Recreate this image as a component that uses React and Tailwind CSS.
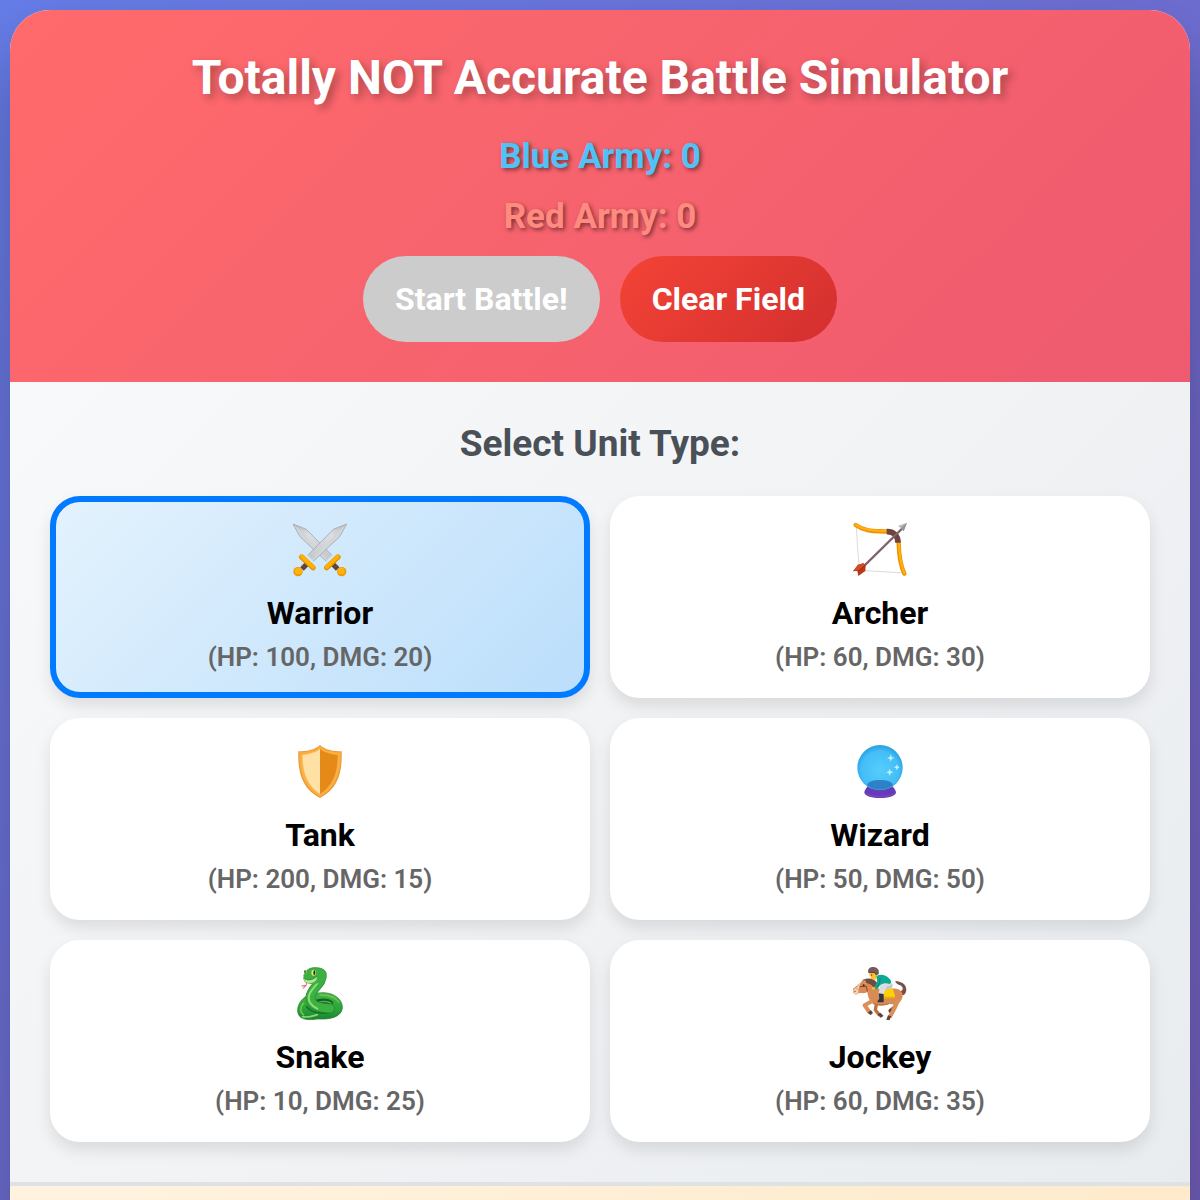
import React, { useState } from "react";
import clsx from "clsx";

function SwordsIcon() {
  return (
    <svg viewBox="36 36 168 168" className="size-14" aria-hidden="true">
      <defs>
        <linearGradient id="blade" x1="0" y1="0" x2="1" y2="1">
          <stop offset="0" stopColor="#b4b8bb" />
          <stop offset="0.35" stopColor="#dcdee0" />
          <stop offset="1" stopColor="#c3c7ca" />
        </linearGradient>
        <g id="sword">
          <path d="M39 42 L79 58 L156 136 L139 154 L60 80 Z" fill="url(#blade)" />
          <path d="M39 42 L60 80 L139 154 L143 150 L72 72 Z" fill="#d3d6d8" />
          <path
            d="M39 42 L79 58 L156 136 M39 42 L60 80 L139 154"
            fill="none"
            stroke="#a3a8ac"
            strokeWidth="2.5"
          />
          <path d="M156 160 L173 177" stroke="#5d4037" strokeWidth="15" />
          <path d="M157 168 L167 158 M163 174 L173 164" stroke="#7b5a4e" strokeWidth="2" />
          <path d="M140 173 L174 141" stroke="#e59100" strokeWidth="16" strokeLinecap="round" />
          <path d="M140 171 L173 140" stroke="#ffb300" strokeWidth="11" strokeLinecap="round" />
          <circle cx="185" cy="185" r="14" fill="#f09b00" />
          <circle cx="184" cy="183" r="10" fill="#ffb511" />
        </g>
      </defs>
      <use href="#sword" />
      <use href="#sword" transform="matrix(-1 0 0 1 239 0)" />
    </svg>
  );
}

function BowIcon() {
  return (
    <svg viewBox="36 36 168 168" className="size-14" aria-hidden="true">
      <path d="M49 47 C52 95 53 140 60 181 L194 189" fill="none" stroke="#cfd3d6" strokeWidth="2.5" />
      <path
        d="M47 45 C82 70 117 61 146 65 C166 69 175 80 176 101 C177 135 180 164 193 191"
        fill="none"
        stroke="#ef9300"
        strokeWidth="13"
        strokeLinecap="round"
      />
      <path
        d="M47 44 C82 68 119 60 146 64 C168 68 176 80 177 101 C178 135 182 163 193 190"
        fill="none"
        stroke="#ffb014"
        strokeWidth="6"
        strokeLinecap="round"
      />
      <path d="M140 65 C160 64 174 76 174 98" fill="none" stroke="#6d4540" strokeWidth="17" />
      <path d="M66 174 L188 54" stroke="#765660" strokeWidth="7" />
      <path d="M69 170 L185 56" stroke="#967c85" strokeWidth="2" />
      <path d="M201 38 L174 48 L183 54 L191 64 Z" fill="#b4b7b9" />
      <path d="M201 38 L183 54 L191 64 Z" fill="#909598" />
      <path d="M77 164 L70 160 L54 164 L39 184 L52 183 L55 198 L76 183 Z" fill="#b93818" />
      <path d="M77 164 L70 160 L54 164 L39 184 L55 180 Z" fill="#d14c24" />
      <path d="M75 166 L54 185" fill="none" stroke="#9a3019" strokeWidth="3" />
    </svg>
  );
}

function ShieldIcon() {
  return (
    <svg viewBox="36 36 168 168" className="size-14" aria-hidden="true">
      <path
        d="M120 39 C105 54 79 58 55 58 C53 118 64 169 120 198 C176 169 187 118 185 58 C161 58 135 54 120 39 Z"
        fill="#e79b36"
      />
      <path
        d="M120 43 C106 57 80 61 58 61 C57 116 68 165 120 194 C172 165 183 116 182 61 C160 61 134 57 120 43 Z"
        fill="#fbae42"
      />
      <path d="M120 51 C107 62 85 67 67 69 C67 116 77 158 120 186 Z" fill="#ffe0a5" />
      <path d="M120 51 C133 62 155 67 173 69 C173 116 163 158 120 186 Z" fill="#e58a19" />
      <path d="M67 69 C67 116 77 158 120 186" fill="none" stroke="#f5c46f" strokeWidth="2" />
    </svg>
  );
}

function CrystalBallIcon() {
  return (
    <svg viewBox="36 36 168 168" className="size-14" aria-hidden="true">
      <defs>
        <radialGradient id="ball" cx="0.5" cy="0.55" r="0.55">
          <stop offset="0" stopColor="#55cdfc" />
          <stop offset="0.75" stopColor="#43bef7" />
          <stop offset="1" stopColor="#269fdf" />
        </radialGradient>
      </defs>
      <path d="M86 156 C80 169 73 175 73 182 C77 203 164 203 168 182 C168 174 160 168 154 156 Z" fill="#673ab7" />
      <path d="M75 181 C82 197 159 197 166 181" fill="none" stroke="#7e4ac7" strokeWidth="3" />
      <circle cx="120" cy="107" r="68" fill="url(#ball)" />
      <path d="M82 160 C80 139 160 139 158 160 C140 177 100 177 82 160 Z" fill="#2465b3" opacity="0.7" />
      <path d="M82 160 C100 177 140 177 158 160" fill="none" stroke="#3b8bcf" strokeWidth="2" />
      <path
        d="M152 67 L155 75 L163 78 L155 81 L152 89 L149 81 L141 78 L149 75 Z M171 97 L173 103 L179 106 L173 109 L171 115 L168 109 L162 106 L168 103 Z M149 110 L152 118 L160 121 L152 124 L149 132 L146 124 L138 121 L146 118 Z"
        fill="#c4f1ff"
      />
    </svg>
  );
}

function SnakeIcon() {
  return (
    <svg viewBox="36 36 168 168" className="size-14" aria-hidden="true">
      <defs>
        <linearGradient id="coil" x1="0" y1="0" x2="0" y2="1">
          <stop offset="0" stopColor="#45b542" />
          <stop offset="0.6" stopColor="#2fa33a" />
          <stop offset="1" stopColor="#1a8531" />
        </linearGradient>
      </defs>
      <path
        d="M78 82 C80 87 80 91 77 95 L66 96 M77 95 L70 103"
        fill="none"
        stroke="#ee4055"
        strokeWidth="3"
        strokeLinecap="round"
      />
      {/* coil */}
      <path
        d="M84 124 C62 134 49 158 54 178 C60 200 92 198 112 195 C150 197 182 190 187 164 C190 138 164 117 132 116 C112 116 98 118 84 124 Z"
        fill="url(#coil)"
        stroke="#1d7f2f"
        strokeWidth="2"
      />
      <path d="M100 142 C112 131 148 130 160 144 C162 156 122 160 104 153 Z" fill="#14642a" />
      <path d="M112 147 C124 141 142 141 154 148" fill="none" stroke="#4fae49" strokeWidth="5" />
      <path d="M120 123 C144 122 166 130 176 144" fill="none" stroke="#6cc756" strokeWidth="4" strokeLinecap="round" />
      <path d="M70 148 C60 162 60 174 70 182" fill="none" stroke="#6cc756" strokeWidth="5" strokeLinecap="round" />
      <path d="M80 158 C92 174 116 180 148 175" fill="none" stroke="#14702c" strokeWidth="5" strokeLinecap="round" />
      <path d="M68 188 C84 192 98 186 112 182" fill="none" stroke="#8fd46c" strokeWidth="5" strokeLinecap="round" />
      {/* neck */}
      <path
        d="M125 62 C130 88 93 102 91 130 C91 154 118 163 150 163"
        fill="none"
        stroke="#1f8a31"
        strokeWidth="29"
        strokeLinecap="round"
      />
      <path
        d="M125 62 C130 88 93 102 91 130 C91 154 118 163 150 163"
        fill="none"
        stroke="#3cb040"
        strokeWidth="25"
        strokeLinecap="round"
      />
      <path
        d="M117 78 C112 95 88 108 86 130 C86 148 98 158 112 164"
        fill="none"
        stroke="#93dc76"
        strokeWidth="6"
        strokeLinecap="round"
      />
      {/* head */}
      <path
        d="M76 56 C82 40 105 37 124 43 C140 49 142 64 138 76 C124 88 96 94 82 88 C73 86 68 74 71 66 Z"
        fill="#3cb040"
      />
      <path
        d="M71 66 C72 60 80 44 96 42 C112 38 134 43 139 58"
        fill="none"
        stroke="#2b9636"
        strokeWidth="2"
      />
      <path d="M71 72 C78 82 99 80 111 68 C113 82 94 91 80 86 C75 84 71 78 71 72 Z" fill="#b8df98" />
      <path d="M71 72 C80 80 98 79 111 66" fill="none" stroke="#23892e" strokeWidth="2" />
      <ellipse cx="101" cy="56" rx="7" ry="9" fill="#e3e675" />
      <ellipse cx="103" cy="56" rx="3" ry="7" fill="#18311b" />
      <ellipse cx="76" cy="53" rx="4" ry="5" fill="#b9ca5e" />
      <ellipse cx="75" cy="53" rx="2" ry="4" fill="#254c22" />
    </svg>
  );
}

function JockeyIcon() {
  return (
    <svg viewBox="36 36 168 168" className="size-14" aria-hidden="true">
      {/* tail */}
      <path
        d="M180 112 C192 110 190 98 180 94 C172 91 167 87 166 81 C183 82 199 90 199 107 C198 122 188 127 182 122 Z"
        fill="#795044"
      />
      {/* far legs */}
      <path
        d="M110 146 L106 168 L119 184 M164 144 L166 157 L150 170"
        fill="none"
        stroke="#bf7043"
        strokeWidth="10"
        strokeLinejoin="round"
      />
      <path d="M113 181 L121 176 L131 186 L121 191 Z M154 163 L158 174 L147 176 L145 168 Z" fill="#5d4240" />
      {/* body, neck and head */}
      <path
        d="M78 78 C94 74 104 88 108 102 C130 108 152 102 168 104 C188 107 192 124 184 138 C176 152 160 152 146 150 C130 156 112 156 100 150 C88 142 84 128 82 114 C74 119 66 117 59 117 L48 122 L40 117 L39 104 L62 86 L70 76 Z"
        fill="#d98b56"
      />
      <path
        d="M98 140 L74 154 L90 177 M176 136 L164 162 L149 190"
        fill="none"
        stroke="#dc9059"
        strokeWidth="12"
        strokeLinejoin="round"
      />
      <path d="M84 175 L93 169 L99 177 L91 184 Z M144 184 L154 187 L148 199 L139 197 Z" fill="#5d4240" />
      <path d="M100 148 C114 154 130 154 146 149" fill="none" stroke="#c2733f" strokeWidth="4" />
      {/* mane */}
      <path
        d="M70 77 C85 70 104 74 111 86 C118 96 114 104 106 106 C98 104 99 93 90 91 L74 85 Z"
        fill="#744b40"
      />
      <path d="M70 88 L75 76 L79 89 Z" fill="#e49b67" />
      <path d="M45 101 L56 109 L55 119 L45 122 L39 112 Z" fill="#f3d0b2" />
      <path d="M61 87 L48 102 L56 106 Z" fill="#ead1b6" />
      <path d="M59 98 L79 97 L82 112" fill="none" stroke="#854131" strokeWidth="3" />
      <circle cx="71" cy="94" r="3" fill="#372d2b" />
      <circle cx="45" cy="112" r="2" fill="#684234" />
      {/* saddle cloth */}
      <path d="M126 104 L158 101 C161 113 166 123 165 131 L127 133 Z" fill="#fdd008" />
      <path d="M127 128 L165 128 L164 133 L127 134 Z" fill="#e8ad0a" />
      {/* rider */}
      <path d="M122 90 C134 82 154 80 158 92 C160 104 144 106 136 106 L131 122 L115 120 Z" fill="#dadee2" />
      <path d="M140 97 C148 96 154 93 158 89 C160 100 148 106 137 106 Z" fill="#c0c6cb" />
      <path d="M116 118 L131 120 L131 145 L112 145 C111 139 118 137 118 133 Z" fill="#37363b" />
      <path d="M87 54 L110 54 L112 70 L106 77 L93 75 L92 68 L88 64 Z" fill="#fdc02f" />
      <circle cx="95" cy="63" r="2" fill="#4e3422" />
      <path
        d="M110 66 C122 59 138 63 149 75 C156 82 154 88 148 90 C138 86 130 88 122 92 L112 105 L101 101 L111 86 Z"
        fill="#11a893"
      />
      <path d="M120 72 L119 86 L110 100" fill="none" stroke="#078678" strokeWidth="3" />
      <path d="M98 98 L107 101 L103 108 L95 104 Z" fill="#fbc02d" />
      <path d="M85 55 C82 45 89 39 101 39 C113 40 119 49 116 61 L108 64 L104 57 Z" fill="#78585a" />
      <path d="M85 55 L105 56 L110 63" fill="none" stroke="#534246" strokeWidth="3" />
    </svg>
  );
}

const UNITS = [
  { id: "warrior", name: "Warrior", hp: 100, dmg: 20, icon: SwordsIcon },
  { id: "archer", name: "Archer", hp: 60, dmg: 30, icon: BowIcon },
  { id: "tank", name: "Tank", hp: 200, dmg: 15, icon: ShieldIcon },
  { id: "wizard", name: "Wizard", hp: 50, dmg: 50, icon: CrystalBallIcon },
  { id: "snake", name: "Snake", hp: 10, dmg: 25, icon: SnakeIcon },
  { id: "jockey", name: "Jockey", hp: 60, dmg: 35, icon: JockeyIcon },
];

function UnitCard({ unit, selected, onSelect }) {
  const Icon = unit.icon;
  return (
    <button
      type="button"
      aria-pressed={selected}
      onClick={() => onSelect(unit.id)}
      className={clsx(
        "flex flex-col items-center rounded-[30px] border-6 p-5 shadow-[0_8px_16px_rgba(0,0,0,0.1)] cursor-pointer",
        selected
          ? "border-[#007bff] bg-linear-135 from-[#e3f2fd] to-[#bbdefb]"
          : "border-white bg-white"
      )}
    >
      <Icon />
      <span className="mt-4 text-[32px] leading-[38px] font-bold text-black">
        {unit.name}
      </span>
      <span className="mt-2.5 text-[26px] leading-[30px] font-semibold text-[#666666]">
        (HP: {unit.hp}, DMG: {unit.dmg})
      </span>
    </button>
  );
}

function App() {
  const [selectedUnit, setSelectedUnit] = useState("warrior");
  const [units, setUnits] = useState([]);

  const blueCount = units.filter((u) => u.team === "blue").length;
  const redCount = units.filter((u) => u.team === "red").length;
  const canStart = blueCount > 0 && redCount > 0;

  return (
    <div className="min-h-screen bg-linear-135 from-[#667eea] to-[#764ba2] p-2.5 font-[Roboto,sans-serif]">
      <div className="overflow-hidden rounded-[40px] bg-white shadow-[0_40px_80px_rgba(0,0,0,0.3)]">
        {/* Header */}
        <header className="flex flex-col items-center bg-linear-135 from-[#ff6b6b] to-[#ee5a6f] p-10 text-center">
          <h1 className="mb-[30px] text-[48px] leading-[56px] font-bold text-white text-shadow-[4px_4px_8px_rgba(0,0,0,0.3)]">
            Totally NOT Accurate Battle Simulator
          </h1>
          <div className="mb-[18px] flex flex-col gap-[18px] text-[35px] leading-[42px] font-bold text-shadow-[2px_2px_4px_rgba(0,0,0,0.5)]">
            <div className="text-[#4fc3f7]">Blue Army: {blueCount}</div>
            <div className="text-[#ff8a80]">Red Army: {redCount}</div>
          </div>
          <div className="flex flex-wrap justify-center gap-5 text-[32px] leading-[38px] font-bold text-white">
            <button
              type="button"
              disabled={!canStart}
              className="rounded-full bg-linear-135 from-[#4caf50] to-[#388e3c] px-8 py-6 disabled:bg-[#cccccc] disabled:bg-none"
            >
              Start Battle!
            </button>
            <button
              type="button"
              onClick={() => setUnits([])}
              className="rounded-full bg-linear-135 from-[#f44336] to-[#d32f2f] px-8 py-6"
            >
              Clear Field
            </button>
          </div>
        </header>

        {/* Unit selection */}
        <section className="border-b-4 border-[#dee2e6] bg-linear-135 from-[#f8f9fa] to-[#e9ecef] p-10">
          <h2 className="mb-[30px] text-center text-[37px] leading-[44px] font-bold text-[#495057]">
            Select Unit Type:
          </h2>
          <div className="grid grid-cols-2 gap-5">
            {UNITS.map((unit) => (
              <UnitCard
                key={unit.id}
                unit={unit}
                selected={unit.id === selectedUnit}
                onSelect={setSelectedUnit}
              />
            ))}
          </div>
        </section>

        {/* Battlefield */}
        <main className="min-h-[1400px] bg-linear-135 from-[#fff3e0] to-[#ffe0b2]" />
      </div>
    </div>
  );
}

export default App;
